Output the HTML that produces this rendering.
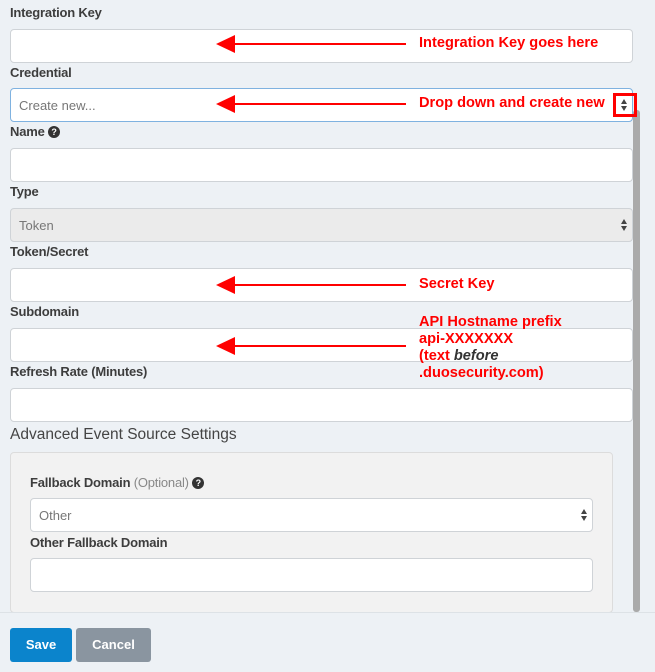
<!DOCTYPE html>
<html><head><meta charset="utf-8"><style>
*{box-sizing:border-box;margin:0;padding:0}
body{width:655px;height:672px;background:#edf1f5;font-family:"Liberation Sans",sans-serif;position:relative;overflow:hidden;color:#3a3a3a}
.l{position:absolute;left:10px;font-size:13px;font-weight:bold;color:#3d3d3d;letter-spacing:-0.2px}
.i{position:absolute;left:10px;width:623px;height:34px;background:#fff;border:1px solid #cfd3d7;border-radius:4px;font-size:13px;color:#777;padding:9px 8px}
.dis{background:#ebebeb}
.sel::after{content:"";position:absolute;right:5px;top:10px;width:0;height:0;border-left:3px solid transparent;border-right:3px solid transparent;border-bottom:5px solid #444}
.sel::before{content:"";position:absolute;right:5px;top:17px;width:0;height:0;border-left:3px solid transparent;border-right:3px solid transparent;border-top:5px solid #444}
.ar{position:absolute;left:216px;width:190px;height:18px}
.ar::before{content:"";position:absolute;left:0;top:0;border-top:9px solid transparent;border-bottom:9px solid transparent;border-right:19px solid #f00}
.ar::after{content:"";position:absolute;left:18px;right:0;top:8px;height:2px;background:#f00}
.t{position:absolute;left:419px;color:#f00;font-weight:bold;font-size:14.6px;line-height:17px;white-space:nowrap}
.q{display:inline-block;width:12px;height:12px;border-radius:50%;background:#333;color:#fff;font-size:9px;text-align:center;line-height:12px;vertical-align:1px}
</style></head><body>
<div class="l" style="top:5px">Integration Key</div>
<div class="i" style="top:29px"></div>
<div class="l" style="top:65px">Credential</div>
<div class="i sel" style="top:88px;border-color:#7fb2e0">Create new...</div>
<div class="l" style="top:124px">Name <span class="q">?</span></div>
<div class="i" style="top:148px"></div>
<div class="l" style="top:184px">Type</div>
<div class="i dis sel" style="top:208px">Token</div>
<div class="l" style="top:244px">Token/Secret</div>
<div class="i" style="top:268px"></div>
<div class="l" style="top:304px">Subdomain</div>
<div class="i" style="top:328px"></div>
<div class="l" style="top:364px">Refresh Rate (Minutes)</div>
<div class="i" style="top:388px"></div>
<div style="position:absolute;left:10px;top:426px;font-size:15.5px;color:#444">Advanced Event Source Settings</div>
<div style="position:absolute;left:10px;top:452px;width:603px;height:161px;background:#f2f2f2;border:1px solid #dcdcdc;border-radius:4px"></div>
<div class="l" style="left:30px;top:475px">Fallback Domain <span style="font-weight:normal;color:#888">(Optional)</span> <span class="q">?</span></div>
<div class="i sel" style="left:30px;width:563px;top:498px">Other</div>
<div class="l" style="left:30px;top:535px">Other Fallback Domain</div>
<div class="i" style="left:30px;width:563px;top:558px"></div>
<div style="position:absolute;left:633px;top:110px;width:7px;height:502px;background:#aaa;border-radius:3px"></div>
<div style="position:absolute;left:0;top:612px;width:655px;height:1px;background:#dde2e6"></div>
<div style="position:absolute;left:10px;top:628px;width:62px;height:34px;background:#0b84cc;border-radius:3px;color:#fff;font-weight:bold;font-size:13px;text-align:center;line-height:34px">Save</div>
<div style="position:absolute;left:76px;top:628px;width:75px;height:34px;background:#8a95a0;border-radius:3px;color:#fff;font-weight:bold;font-size:13px;text-align:center;line-height:34px">Cancel</div>
<div class="ar" style="top:35px"></div>
<div class="t" style="top:35px">Integration Key goes here</div>
<div class="ar" style="top:95px"></div>
<div class="t" style="top:95px">Drop down and create new</div>
<div style="position:absolute;left:613px;top:93px;width:24px;height:24px;border:3px solid #f00"></div>
<div class="ar" style="top:276px"></div>
<div class="t" style="top:276px">Secret Key</div>
<div class="ar" style="top:337px"></div>
<div class="t" style="top:314px">API Hostname prefix<br>api-XXXXXXX<br>(text <i style="color:#333">before</i><br>.duosecurity.com)</div>
</body></html>
